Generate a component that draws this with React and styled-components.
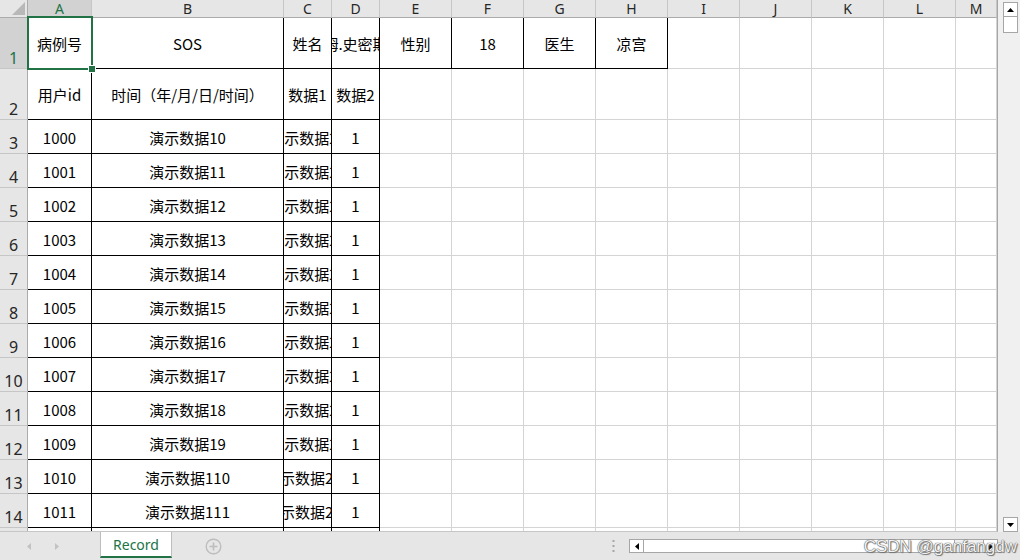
import React from 'react';
import styled, { createGlobalStyle, css } from 'styled-components';

const GlobalStyle = createGlobalStyle`
  html, body {
    margin: 0;
    padding: 0;
    overflow: hidden;
    background: #ffffff;
  }
`;

const GREEN = '#217346';
const GRID = '#d4d4d4';

const Window = styled.div`
  width: 1020px;
  height: 560px;
  display: flex;
  flex-direction: column;
  position: relative;
  background: #ffffff;
  font-family: "Noto Sans CJK SC", "Noto Sans", sans-serif;
`;

const Main = styled.div`
  display: flex;
  height: 532px;
`;

const Sheet = styled.div`
  width: 998px;
  height: 532px;
  flex-shrink: 0;
  box-sizing: border-box;
  border-right: 1px solid #a6a6a6;
  border-bottom: 1px solid #c6c6c6;
  display: grid;
  grid-template-columns: 28px 64px 192px 48px 48px repeat(8, 72px) 41px;
  grid-template-rows: 18px 51px 51px repeat(12, 34px) 3px;
  overflow: hidden;
`;

const Corner = styled.div`
  background: #e6e6e6;
  box-sizing: border-box;
  border-right: 1px solid #ababab;
  border-bottom: 1px solid #ababab;
  display: flex;
  align-items: flex-end;
  justify-content: flex-end;
  padding: 0 2px 2px 0;
`;

const ColHead = styled.div`
  box-sizing: border-box;
  background: ${(p) => (p.$active ? '#d2d2d2' : '#e6e6e6')};
  color: ${(p) => (p.$active ? GREEN : '#262626')};
  border-right: 1px solid #c6c6c6;
  border-bottom: ${(p) => (p.$active ? `1px solid ${GREEN}` : '1px solid #ababab')};
  font-family: "Noto Sans", "Liberation Sans", sans-serif;
  font-size: 14px;
  line-height: 17px;
  display: flex;
  align-items: center;
  justify-content: center;
  white-space: nowrap;
`;

const RowHead = styled.div`
  box-sizing: border-box;
  background: ${(p) => (p.$active ? '#d2d2d2' : '#e6e6e6')};
  color: ${(p) => (p.$active ? GREEN : '#262626')};
  border-right: ${(p) => (p.$active ? `1px solid ${GREEN}` : '1px solid #ababab')};
  border-bottom: ${(p) => (p.$last ? 'none' : '1px solid #c6c6c6')};
  font-family: "Noto Sans", "Liberation Sans", sans-serif;
  font-size: 16px;
  line-height: 18px;
  display: flex;
  align-items: flex-end;
  justify-content: center;
  padding-bottom: 1px;
  overflow: hidden;
`;

const Cell = styled.div`
  position: relative;
  box-sizing: border-box;
  border-right: 1px solid ${(p) => (p.$rb ? '#000' : GRID)};
  border-bottom: ${(p) => (p.$last ? 'none' : `1px solid ${p.$bb ? '#000' : GRID}`)};
  font-size: 15px;
  color: #000;
  display: flex;
  align-items: center;
  justify-content: center;
  white-space: nowrap;
  overflow: ${(p) => (p.$selected ? 'visible' : 'hidden')};
  padding-top: 1px;
  ${(p) =>
    p.$selected &&
    css`
      z-index: 2;
    `}
`;

const Selection = styled.div`
  position: absolute;
  top: -2px;
  left: -1px;
  right: -2px;
  bottom: -2px;
  border: 2px solid ${GREEN};
  pointer-events: none;
`;

const Handle = styled.div`
  position: absolute;
  right: -5px;
  bottom: -5px;
  width: 6px;
  height: 6px;
  background: ${GREEN};
  border: 1px solid #fff;
`;

const VScroll = styled.div`
  width: 22px;
  flex-shrink: 0;
  background: #f0f0f0;
  display: flex;
  flex-direction: column;
  align-items: center;
  padding: 2px 0 0 3px;
  box-sizing: border-box;
`;

const ScrollBtn = styled.div`
  width: 15px;
  height: 15px;
  box-sizing: border-box;
  background: #ffffff;
  border: 1px solid #a6a6a6;
  display: flex;
  align-items: center;
  justify-content: center;
`;

const VThumb = styled.div`
  width: 15px;
  height: 16px;
  box-sizing: border-box;
  background: #ffffff;
  border: 1px solid #a6a6a6;
  border-top: none;
`;

const Spacer = styled.div`
  flex: 1;
`;

const TabBar = styled.div`
  height: 28px;
  background: #e6e6e6;
  display: flex;
  align-items: stretch;
  & > * {
    flex-shrink: 0;
  }
`;

const NavArrows = styled.div`
  width: 100px;
  display: flex;
  align-items: center;
  gap: 22px;
  padding-left: 26px;
  box-sizing: border-box;
`;

const SheetTab = styled.div`
  width: 72px;
  height: 26px;
  box-sizing: border-box;
  background: #ffffff;
  border-left: 1px solid #bdbdbd;
  border-right: 1px solid #bdbdbd;
  border-bottom: 2px solid ${GREEN};
  color: ${GREEN};
  font-family: "Noto Sans", "Liberation Sans", sans-serif;
  font-size: 14px;
  display: flex;
  align-items: center;
  justify-content: center;
  padding-top: 1px;
`;

const AddSheet = styled.div`
  width: 82px;
  display: flex;
  align-items: center;
  justify-content: center;
`;

const Dots = styled.div`
  width: 18px;
  margin-left: 350px;
  display: flex;
  align-items: center;
  justify-content: center;
`;

const HScroll = styled.div`
  width: 369px;
  margin-left: 7px;
  display: flex;
  align-items: center;
`;

const HTrack = styled.div`
  display: flex;
  width: 369px;
  height: 14px;
`;

const HBtn = styled.div`
  width: 15px;
  height: 14px;
  box-sizing: border-box;
  background: #ffffff;
  border: 1px solid #a6a6a6;
  display: flex;
  align-items: center;
  justify-content: center;
`;

const HThumb = styled.div`
  width: 311px;
  height: 14px;
  box-sizing: border-box;
  background: #ffffff;
  border: 1px solid #a6a6a6;
  border-left: none;
`;

const HRest = styled.div`
  flex: 1;
  height: 14px;
  box-sizing: border-box;
  background: #f0f0f0;
  border-top: 1px solid #a6a6a6;
  border-bottom: 1px solid #a6a6a6;
`;

const Watermark = styled.div`
  position: absolute;
  right: 3px;
  bottom: 3px;
  font-family: "Liberation Sans", Arial, sans-serif;
  font-size: 17px;
  color: #f2f2f2;
  text-shadow: 0 0 1px #4f4f4f, 0 0 1px #4f4f4f, 1px 1px 1px #7a7a7a;
  pointer-events: none;
`;

const COLS = ['A', 'B', 'C', 'D', 'E', 'F', 'G', 'H', 'I', 'J', 'K', 'L', 'M'];

const header1 = ['病例号', 'SOS', '姓名', '姆.史密斯', '性别', '18', '医生', '凉宫'];
const header2 = ['用户id', '时间（年/月/日/时间）', '数据1', '数据2'];

const rows = [header1, header2];
for (let i = 0; i < 12; i++) {
  rows.push([String(1000 + i), `演示数据1${i}`, `演示数据2${i}`, '1']);
}
rows.push([]);

const Tri = ({ dir, color = '#000' }) => {
  const pts = {
    up: '0,5 7,5 3.5,1',
    down: '0,1 7,1 3.5,5',
    left: '5,0 5,7 1,3.5',
    right: '1,0 1,7 5,3.5',
  }[dir];
  const w = dir === 'up' || dir === 'down' ? 7 : 6;
  const h = dir === 'up' || dir === 'down' ? 6 : 7;
  return (
    <svg width={w} height={h} viewBox={`0 0 ${w} ${h}`}>
      <polygon points={pts} fill={color} />
    </svg>
  );
};

const App = () => {
  return (
    <>
      <GlobalStyle />
      <Window>
        <Main>
          <Sheet>
            <Corner>
              <svg width="13" height="13" viewBox="0 0 13 13">
                <polygon points="0,13 13,13 13,0" fill="#b8b8b8" />
              </svg>
            </Corner>
            {COLS.map((c, i) => (
              <ColHead key={c} $active={i === 0}>
                {c}
              </ColHead>
            ))}

            {rows.map((row, r) => {
              const last = r === rows.length - 1;
              return (
                <React.Fragment key={r}>
                  <RowHead $active={r === 0} $last={last}>
                    {last ? '' : r + 1}
                  </RowHead>
                  {COLS.map((c, ci) => {
                    const bordered = ci < 4 || (r === 0 && ci < 8);
                    const selected = r === 0 && ci === 0;
                    return (
                      <Cell
                        key={c}
                        $rb={bordered}
                        $bb={bordered}
                        $last={last}
                        $selected={selected}
                      >
                        {row[ci] ? <span>{row[ci]}</span> : null}
                        {selected && (
                          <Selection>
                            <Handle />
                          </Selection>
                        )}
                      </Cell>
                    );
                  })}
                </React.Fragment>
              );
            })}
          </Sheet>

          <VScroll>
            <ScrollBtn>
              <Tri dir="up" />
            </ScrollBtn>
            <VThumb />
            <Spacer />
            <ScrollBtn>
              <Tri dir="down" />
            </ScrollBtn>
          </VScroll>
        </Main>

        <TabBar>
          <NavArrows>
            <Tri dir="left" color="#c2c2c2" />
            <Tri dir="right" color="#c2c2c2" />
          </NavArrows>
          <SheetTab>Record</SheetTab>
          <AddSheet>
            <svg width="17" height="17" viewBox="0 0 17 17">
              <circle cx="8.5" cy="8.5" r="7.3" fill="none" stroke="#bdbdbd" strokeWidth="1.4" />
              <path d="M8.5 4.5v8M4.5 8.5h8" stroke="#bdbdbd" strokeWidth="1.6" />
            </svg>
          </AddSheet>
          <Dots>
            <svg width="3" height="12" viewBox="0 0 3 12">
              <rect x="0.5" y="0" width="2" height="2" fill="#a6a6a6" />
              <rect x="0.5" y="5" width="2" height="2" fill="#a6a6a6" />
              <rect x="0.5" y="10" width="2" height="2" fill="#a6a6a6" />
            </svg>
          </Dots>
          <HScroll>
            <HTrack>
              <HBtn>
                <Tri dir="left" />
              </HBtn>
              <HThumb />
              <HRest />
              <HBtn>
                <Tri dir="right" />
              </HBtn>
            </HTrack>
          </HScroll>
        </TabBar>

        <Watermark>CSDN @ganfangdw</Watermark>
      </Window>
    </>
  );
};

export default App;
